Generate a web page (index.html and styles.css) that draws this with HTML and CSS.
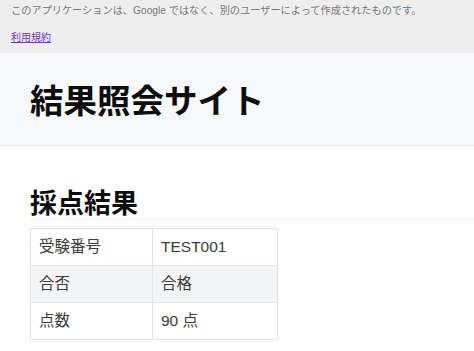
FILE: index.html
```html
<!DOCTYPE html>
<html lang="ja">
<head>
<meta charset="utf-8">
<title>結果照会サイト</title>
<link rel="stylesheet" href="styles.css">
</head>
<body>
<div class="banner">
  <p class="warn">このアプリケーションは、Google ではなく、別のユーザーによって作成されたものです。</p>
  <p class="terms"><a href="#">利用規約</a></p>
</div>
<header class="hero">
  <h1>結果照会サイト</h1>
</header>
<main class="content">
  <h2>採点結果</h2>
  <table class="results">
    <tr><td class="k">受験番号</td><td>TEST001</td></tr>
    <tr class="alt"><td class="k">合否</td><td>合格</td></tr>
    <tr><td class="k">点数</td><td>90 点</td></tr>
  </table>
</main>
</body>
</html>
```

FILE: styles.css
```css
html, body {
  margin: 0;
  padding: 0;
  background: #ffffff;
  font-family: "Liberation Sans", "Noto Sans CJK JP", sans-serif;
}
.banner {
  background: #eeeeee;
  padding: 4px 11px 8px;
  height: 41px;
}
.banner p {
  margin: 0;
  line-height: 14px;
}
.warn {
  font-size: 10.2px;
  color: #777777;
}
.terms {
  margin-top: 13px !important;
  font-size: 10px;
}
.terms a {
  color: #6a35c8;
  text-decoration: underline;
}
.hero {
  background: #f7f8fa;
  border-bottom: 1px solid #e6e7e9;
  padding: 26px 30px;
  height: 40px;
}
.hero h1 {
  margin: 0;
  font-family: "Noto Sans CJK JP", sans-serif;
  font-weight: 700;
  font-size: 33.5px;
  line-height: 40px;
  color: #0d0d0d;
}
.content {
  padding: 40px 0 0 30px;
}
.content h2 {
  margin: 0;
  font-family: "Noto Sans CJK JP", sans-serif;
  font-weight: 700;
  font-size: 27px;
  line-height: 32px;
  color: #0d0d0d;
  padding-bottom: 1px;
  border-bottom: 1px solid #f0f0f0;
}
.results {
  margin-top: 8px;
  border-collapse: collapse;
  width: 248px;
  font-size: 15.5px;
  color: #3a3a3a;
  box-shadow: 0 1px 2px rgba(0,0,0,0.06);
}
.results td {
  border: 1px solid #e2e4e7;
  height: 36px;
  padding: 0 8px;
  line-height: 20px;
}
.results td.k {
  width: 105px;
}
.results tr.alt td {
  background: #f3f4f6;
}
```
